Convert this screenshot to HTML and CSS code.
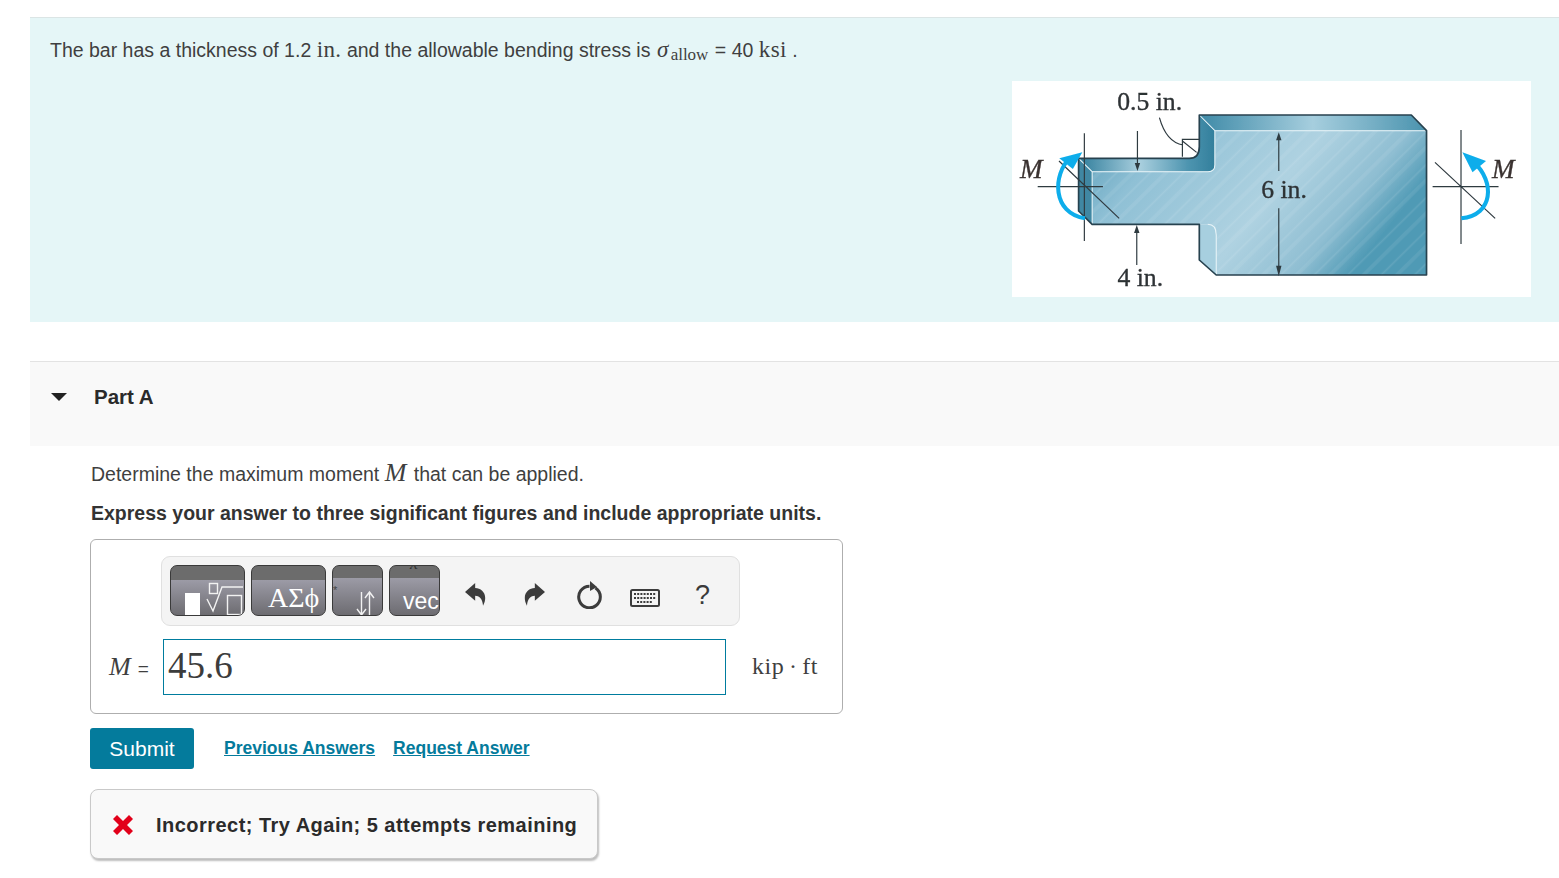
FILE: index.html
```html
<!DOCTYPE html>
<html lang="en">
<head>
<meta charset="utf-8">
<title>Part A</title>
<link rel="stylesheet" href="styles.css">
</head>
<body>
<main class="page">
  <section class="problem">
    <p class="statement">The bar has a thickness of 1.2 <span class="math">in.</span> and the allowable bending stress is <span class="math sigma"><i>σ</i><sub>allow</sub></span> = 40 <span class="math">ksi</span> .</p>
    <figure class="figure">
      <svg class="figure-art" viewBox="6 18 1535 648" preserveAspectRatio="none" width="519" height="216" xmlns="http://www.w3.org/2000/svg">
        <defs>
          <linearGradient id="face" x1="0" y1="0" x2="1" y2="0.35">
            <stop offset="0" stop-color="#5d9fba"/>
            <stop offset="0.22" stop-color="#8fc0d5"/>
            <stop offset="0.62" stop-color="#afd2e1"/>
            <stop offset="0.85" stop-color="#8fbed2"/>
            <stop offset="1" stop-color="#4f9ab5"/>
          </linearGradient>
          <linearGradient id="strip" x1="0" y1="0" x2="1" y2="0">
            <stop offset="0" stop-color="#3e8aa7"/>
            <stop offset="0.5" stop-color="#a6cede"/>
            <stop offset="1" stop-color="#4a93ae"/>
          </linearGradient>
          <linearGradient id="neck" x1="0" y1="0" x2="1" y2="0">
            <stop offset="0" stop-color="#2f7d9b"/>
            <stop offset="0.45" stop-color="#a9cfde"/>
            <stop offset="0.8" stop-color="#4e95b0"/>
            <stop offset="1" stop-color="#327f9c"/>
          </linearGradient>
          <pattern id="streak" width="70" height="70" patternUnits="userSpaceOnUse" patternTransform="rotate(45)">
            <rect x="8" width="5" height="70" class="streak-a"/>
            <rect x="38" width="11" height="70" class="streak-b"/>
          </pattern>
          <filter id="soft"><feGaussianBlur stdDeviation="1.1"/></filter>
        </defs>
        <g filter="url(#soft)">
          <path class="neck" d="M560 120L606 167V270Q606 290 586 290H243L203 250H530Q560 250 560 215Z"/>
          <path class="strip" d="M560 120H1187L1232 167H606Z"/>
          <path class="end" d="M203 250L243 290V448L203 408Z"/>
          <path class="foot" d="M560 448H585Q610 448 610 480V600L560 555Z"/>
          <path class="face" d="M243 290H586Q606 290 606 270V167H1232V600H610V480Q610 448 585 448H243Z"/>
          <path class="face-streak" d="M243 290H586Q606 290 606 270V167H1232V600H610V480Q610 448 585 448H243Z"/>
          <path class="edge-light" d="M243 448V290H586Q606 290 606 270V167H1232M560 120L606 167M203 250L243 290M1187 120L1232 167M610 600V480Q610 448 585 448"/>
          <path class="edge" d="M203 250H530Q560 250 560 215V120H1187L1232 167V600H610L560 555V448H243L203 408Z"/>
          <path class="thin" d="M510 245V193H560M442 128C455 175 480 205 512 210M510 198L552 232"/>
          <path class="thin" d="M377 168V270M375 570V465M795 288V190M795 400V582"/>
          <path class="ink" d="M377 288L369 264H385ZM375 450L367 474H383ZM795 172L787 196H803ZM795 604L787 572H803Z"/>
          <path class="thin" d="M220 175V498M82 335H275M145 258L323 430M1334 165V507M1250 335H1445M1257 262L1435 430"/>
          <path class="arc" d="M222 430C125 415 125 300 178 248"/>
          <path class="head" d="M214 232L146 250L186 282Z"/>
          <path class="arc" d="M1335 430C1430 420 1435 320 1372 262"/>
          <path class="head" d="M1338 232L1408 258L1368 292Z"/>
          <text class="label" x="317" y="105">0.5 in.</text>
          <text class="label" x="318" y="632">4 in.</text>
          <text class="label" x="743" y="368">6 in.</text>
          <text class="label-m" x="30" y="309">M</text>
          <text class="label-m" x="1426" y="309">M</text>
        </g>
      </svg>
    </figure>
  </section>

  <section class="part">
    <header class="part-head">
      <span class="caret"></span>
      <h2 class="part-title">Part A</h2>
    </header>
    <div class="part-body">
      <p class="question">Determine the maximum moment <i class="math">M</i> that can be applied.</p>
      <p class="instruction">Express your answer to three significant figures and include appropriate units.</p>

      <div class="answer-box">
        <div class="toolbar">
          <div class="tool-group">
            <span class="tool tool-wide">
              <svg class="tool-svg" viewBox="0 0 75 51" width="75" height="51" xmlns="http://www.w3.org/2000/svg">
                <rect class="white-fill" x="15" y="28" width="15" height="23"/>
                <rect class="white-line" x="39.500" y="18.500" width="8" height="10"/>
                <path class="white-line" d="M37 34L43 46L52 22H73"/>
                <rect class="white-line" x="57.500" y="30.500" width="14" height="19"/>
              </svg>
            </span>
            <span class="tool tool-wide tool-text">ΑΣϕ</span>
            <span class="tool tool-narrow">
              <span class="tiny-star">*</span>
              <svg class="tool-svg" viewBox="0 0 51 51" width="51" height="51" xmlns="http://www.w3.org/2000/svg">
                <path class="white-line" d="M29.500 27V50M25 44L29.500 50L34 44M37.500 50V27M33 33L37.500 27L42 33"/>
              </svg>
            </span>
            <span class="tool tool-narrow tool-vec"><span class="tiny-x">x</span>vec</span>
          </div>
          <div class="actions">
            <svg class="act-undo" viewBox="75 128 64 70" width="21" height="23" xmlns="http://www.w3.org/2000/svg"><path class="dark-fill" d="M75 155L106 128V143C128 143 147 165 130 197C128 175 118 167 106 167V182Z"/></svg>
            <svg class="act-redo" viewBox="75 128 64 70" width="21" height="23" xmlns="http://www.w3.org/2000/svg"><path class="dark-fill" d="M139 155L108 128V143C86 143 67 165 84 197C86 175 96 167 108 167V182Z"/></svg>
            <svg class="act-reset" viewBox="0 0 26 28" width="26" height="28" xmlns="http://www.w3.org/2000/svg"><path class="dark-stroke" d="M18.500 7A10.800 10.800 0 1 1 12.500 5.200"/><path class="dark-fill" d="M13 0L20 6L13 10Z"/></svg>
            <svg class="act-keys" viewBox="0 0 30 19" width="30" height="19" xmlns="http://www.w3.org/2000/svg"><rect class="key-frame" x="1" y="1" width="28" height="16" rx="1.500"/><path class="key-row" d="M4 5H26M4 9H26M7 13H22"/></svg>
            <span class="act-help">?</span>
          </div>
        </div>
        <div class="answer-row">
          <span class="answer-label"><i class="answer-m">M</i><span class="equals">=</span></span>
          <div class="answer-input">45.6</div>
          <span class="answer-unit">kip · ft</span>
        </div>
      </div>

      <div class="submit-row">
        <button class="submit" type="button">Submit</button>
        <a class="link" href="#">Previous Answers</a>
        <a class="link" href="#">Request Answer</a>
      </div>

      <div class="feedback">
        <svg class="x-icon" viewBox="0 0 20 20" width="20" height="20" xmlns="http://www.w3.org/2000/svg"><path class="x-path" d="M4 0L10 6L16 0L20 4L14 10L20 16L16 20L10 14L4 20L0 16L6 10L0 4Z"/></svg>
        <span class="feedback-text">Incorrect; Try Again; 5 attempts remaining</span>
      </div>
    </div>
  </section>
</main>
</body>
</html>
```

FILE: styles.css
```css
* { box-sizing: border-box; }
html, body { margin: 0; padding: 0; background: #fff; }
body { font-family: "Liberation Sans", Arial, sans-serif; color: #3f3f3f; font-size: 19.500px; overflow: hidden; height: 878px; }
p, h2, figure { margin: 0; }
.page { padding: 17px 0 0 30px; }
.math { font-family: "Liberation Serif", serif; font-size: 23px; letter-spacing: .4px; }
.sigma { margin: 0 1px 0 1px; }
.sigma i { margin-right: 2px; }
.problem { background: #e5f6f7; border-top: 1px solid #dbe5e5; height: 305px; padding: 20px 28px 0 20px; display: flex; flex-direction: column; }
.statement { line-height: 24px; height: 43px; white-space: nowrap; }
.statement sub { font-size: 17px; line-height: 0; vertical-align: -3px; letter-spacing: 0; }
.figure { align-self: flex-end; width: 519px; height: 216px; background: #fff; }
.figure-art { display: block; }
.neck { fill: url(#neck); }
.strip { fill: url(#strip); }
.end { fill: #3f87a3; }
.foot { fill: #a7cfdf; }
.face { fill: url(#face); }
.face-streak { fill: url(#streak); }
.streak-a { fill: #ffffff; opacity: .1; }
.streak-b { fill: #ffffff; opacity: .07; }
.edge-light { fill: none; stroke: #e8f4f8; stroke-width: 3; }
.edge { fill: none; stroke: #28424f; stroke-width: 5; stroke-linejoin: round; }
.thin { fill: none; stroke: #2f3a40; stroke-width: 3.500; }
.ink { fill: #2f3a40; }
.arc { fill: none; stroke: #0badeb; stroke-width: 12; }
.head { fill: #0badeb; }
.label { font-family: "Liberation Serif", serif; font-size: 76px; fill: #2d3134; stroke: #2d3134; stroke-width: 1; }
.label-m { font-family: "Liberation Serif", serif; font-size: 80px; font-style: italic; fill: #3a3230; stroke: #3a3230; stroke-width: 1; }
.part { margin-top: 39px; }
.part-head { height: 85px; background: #f9f9f9; border-top: 1px solid #e3e3e3; display: flex; align-items: flex-start; padding: 23px 0 0 21px; }
.caret { width: 0; height: 0; margin-top: 8px; border-left: 8px solid transparent; border-right: 8px solid transparent; border-top: 8px solid #222; }
.part-title { font-size: 20.500px; line-height: 24px; font-weight: 700; color: #2a2a2a; margin-left: 27px; }
.part-body { padding: 15px 0 0 60px; }
.question { line-height: 24px; padding-left: 1px; }
.question .math { font-size: 26px; margin: 0 2px 0 0; letter-spacing: 0; }
.instruction { line-height: 24px; font-weight: 700; margin-top: 15px; padding-left: 1px; color: #333; }
.answer-box { width: 753px; height: 175px; margin-top: 14px; border: 1px solid #aeaeae; border-radius: 6px; padding: 16px 0 0 70px; }
.toolbar { width: 579px; height: 70px; border: 1px solid #e0e0e0; border-radius: 9px; background: #f4f4f4; padding: 8px 0 0 8px; display: flex; }
.tool-group { display: flex; gap: 6px; }
.tool { display: block; position: relative; height: 51px; overflow: hidden; border: 1px solid #3a3a3a; border-radius: 7px; color: #fff; background: linear-gradient(#6c6c6c 0 14px, #9c9ba6 14px, #6d6c71 100%); }
.tool-wide { width: 75px; }
.tool-narrow { width: 51px; background: linear-gradient(#6c6c6c 0 12px, #9c9ba6 12px, #6d6c71 100%); }
.tool-svg { position: absolute; left: -1px; top: -1px; display: block; }
.white-fill { fill: #fff; }
.white-line { fill: none; stroke: #f2f2f2; stroke-width: 1.400; }
.tool-text { font-family: "Liberation Serif", serif; font-size: 28px; line-height: 30px; padding: 17px 0 0 16px; white-space: nowrap; }
.tool-vec { font-size: 23px; line-height: 24px; padding: 23px 0 0 13px; white-space: nowrap; }
.tiny-x { position: absolute; left: 20px; top: -13px; font-family: "Liberation Serif", serif; font-style: italic; font-size: 18px; line-height: 20px; color: #333; }
.tiny-star { position: absolute; left: 0; top: 18px; font-size: 11px; line-height: 12px; color: #444; }
.actions { display: flex; align-items: flex-start; margin-left: 25px; }
.act-undo { margin-top: 18px; }
.act-redo { margin: 18px 0 0 38px; }
.act-reset { margin: 16px 0 0 32px; }
.act-keys { margin: 24px 0 0 27px; }
.act-help { margin: 15px 0 0 35px; font-size: 27px; line-height: 30px; color: #3a3a3a; }
.dark-fill { fill: #3c3c3c; }
.dark-stroke { fill: none; stroke: #3c3c3c; stroke-width: 3; }
.key-frame { fill: none; stroke: #3c3c3c; stroke-width: 2; }
.key-row { fill: none; stroke: #3c3c3c; stroke-width: 2; stroke-dasharray: 2 1.200; }
.answer-row { display: flex; align-items: flex-start; margin: 13px 0 0 -52px; }
.answer-label { width: 54px; padding-top: 14px; font-family: "Liberation Serif", serif; line-height: 28px; white-space: nowrap; }
.answer-m { font-size: 26px; }
.equals { font-family: "Liberation Sans", sans-serif; font-size: 19px; margin-left: 7px; }
.answer-input { width: 563px; height: 56px; border: 1px solid #007c9e; padding-left: 4px; font-family: "Liberation Serif", serif; font-size: 37px; line-height: 52px; color: #3c3c3c; }
.answer-unit { margin: 13px 0 0 26px; font-family: "Liberation Serif", serif; font-size: 24px; line-height: 28px; word-spacing: -2px; letter-spacing: .6px; white-space: nowrap; }
.submit-row { display: flex; align-items: center; margin-top: 14px; }
.submit { width: 104px; height: 41px; border: 0; border-radius: 3px; padding: 0; background: #047b9c; color: #fff; font-family: "Liberation Sans", sans-serif; font-size: 21px; }
.link { color: #047b9c; font-weight: 700; font-size: 17.500px; line-height: 22px; margin-left: 18px; position: relative; top: -1px; }
.submit + .link { margin-left: 30px; }
.feedback { width: 508px; height: 70px; margin-top: 20px; display: flex; align-items: center; padding: 2px 0 0 22px; background: #f9f9f9; border: 1px solid #c9c9c9; border-radius: 8px; box-shadow: 1px 2px 2px #bdbdbd; }
.x-path { fill: #e2001a; }
.x-icon { flex: none; }
.feedback-text { margin-left: 23px; font-weight: 700; font-size: 20px; letter-spacing: .47px; color: #2b2b2b; white-space: nowrap; }
```
